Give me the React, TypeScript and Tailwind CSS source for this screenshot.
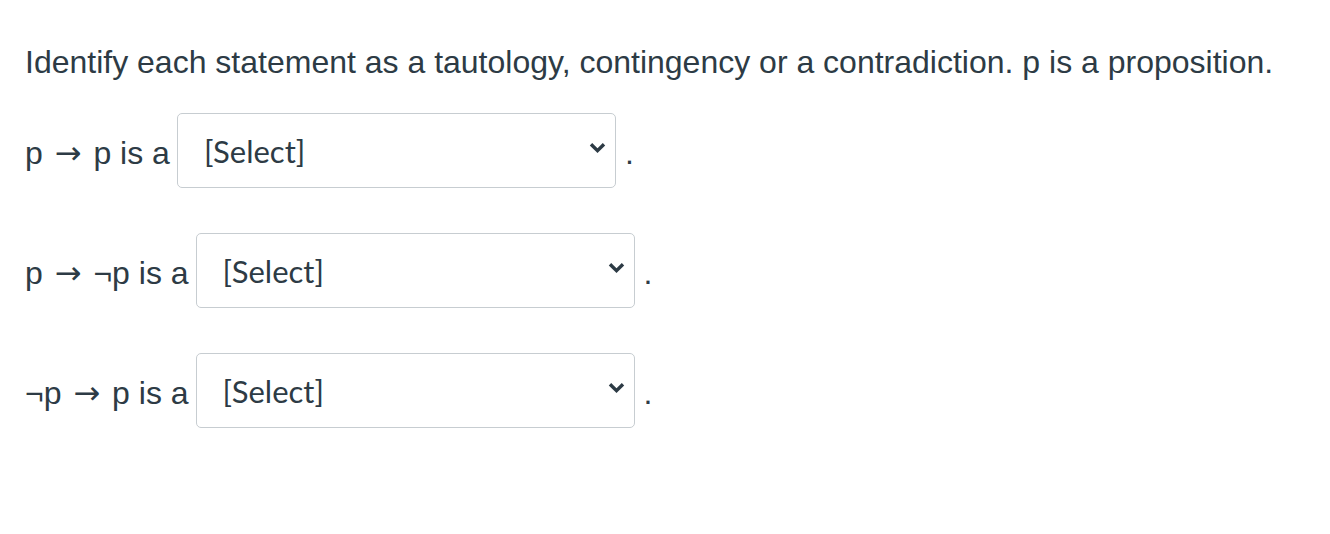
import React from 'react';

const Dropdown = () => (
  <div className="relative w-[439px] h-[75px] rounded-[5px] border border-[#c7cdd1] bg-white pl-[26px] pt-[17px]">
    <span className="block font-['Lato',sans-serif] text-[31px] text-[#2d3b45] leading-[40px]">[Select]</span>
    <svg className="absolute right-[9px] top-[28px]" width="17" height="12" viewBox="0 0 17 12">
      <path d="M2 2.2 L8.5 8.7 L15 2.2" fill="none" stroke="#2d3b45" strokeWidth="3.4" />
    </svg>
  </div>
);

const Arrow = () => <span className="font-['DejaVu_Sans',sans-serif] mx-[3px]">→</span>;

const Row = ({ children }: { children: React.ReactNode }) => (
  <div className="flex items-start h-[75px]">
    <span className="text-[32px] text-[#2d3b45] leading-[40px] mt-[20px] pr-[7px] whitespace-pre">{children}</span>
    <Dropdown />
    <span className="text-[32px] text-[#2d3b45] leading-[40px] mt-[20px] pl-[9px]">.</span>
  </div>
);

export default function App() {
  return (
    <div className="w-[1330px] h-[534px] bg-white font-['Liberation_Sans',Arial,sans-serif] pl-[25px] pt-[42px]">
      <p className="text-[32px] text-[#2d3b45] leading-[40px]">
        Identify each statement as a tautology, contingency or a contradiction. p is a proposition.
      </p>
      <div className="mt-[31px] flex flex-col gap-[45px]">
        <Row>p <Arrow /> p is a</Row>
        <Row>p <Arrow /> ¬p is a</Row>
        <Row>¬p <Arrow /> p is a</Row>
      </div>
    </div>
  );
}
